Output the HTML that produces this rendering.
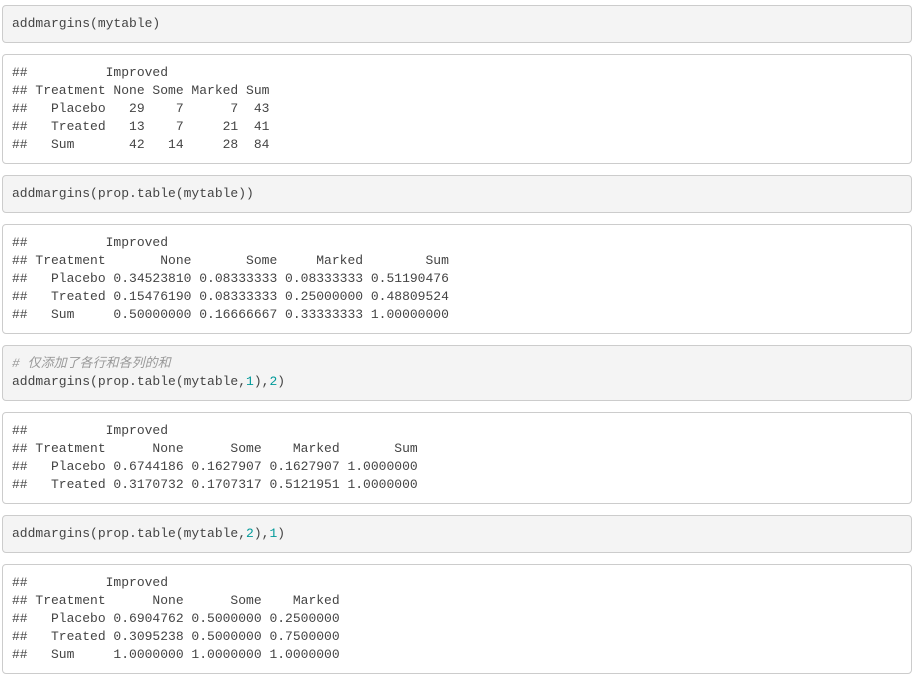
<!DOCTYPE html>
<html><head><meta charset="utf-8"><style>
body{margin:0;background:#fff;width:918px;height:679px;overflow:hidden;position:relative}
pre{position:absolute;left:2px;width:890px;margin:0;padding:9px 9px 9px 9px;border:1px solid #ccc;border-radius:4px;font-family:"Liberation Mono","Noto Sans CJK SC",monospace;font-size:13px;line-height:18px;color:#444;background:#fff;white-space:pre;box-sizing:content-box}
pre.c{background:#f4f4f4}
.n{color:#099}
.cm{color:#999;font-style:italic}
</style></head><body>
<pre class="c" style="top:5px">addmargins(mytable)</pre>
<pre style="top:54px">##          Improved
## Treatment None Some Marked Sum
##   Placebo   29    7      7  43
##   Treated   13    7     21  41
##   Sum       42   14     28  84</pre>
<pre class="c" style="top:175px">addmargins(prop.table(mytable))</pre>
<pre style="top:224px">##          Improved
## Treatment       None       Some     Marked        Sum
##   Placebo 0.34523810 0.08333333 0.08333333 0.51190476
##   Treated 0.15476190 0.08333333 0.25000000 0.48809524
##   Sum     0.50000000 0.16666667 0.33333333 1.00000000</pre>
<pre class="c" style="top:345px"><span class="cm"># 仅添加了各行和各列的和</span>
addmargins(prop.table(mytable,<span class="n">1</span>),<span class="n">2</span>)</pre>
<pre style="top:412px">##          Improved
## Treatment      None      Some    Marked       Sum
##   Placebo 0.6744186 0.1627907 0.1627907 1.0000000
##   Treated 0.3170732 0.1707317 0.5121951 1.0000000</pre>
<pre class="c" style="top:515px">addmargins(prop.table(mytable,<span class="n">2</span>),<span class="n">1</span>)</pre>
<pre style="top:564px">##          Improved
## Treatment      None      Some    Marked
##   Placebo 0.6904762 0.5000000 0.2500000
##   Treated 0.3095238 0.5000000 0.7500000
##   Sum     1.0000000 1.0000000 1.0000000</pre>
</body></html>
